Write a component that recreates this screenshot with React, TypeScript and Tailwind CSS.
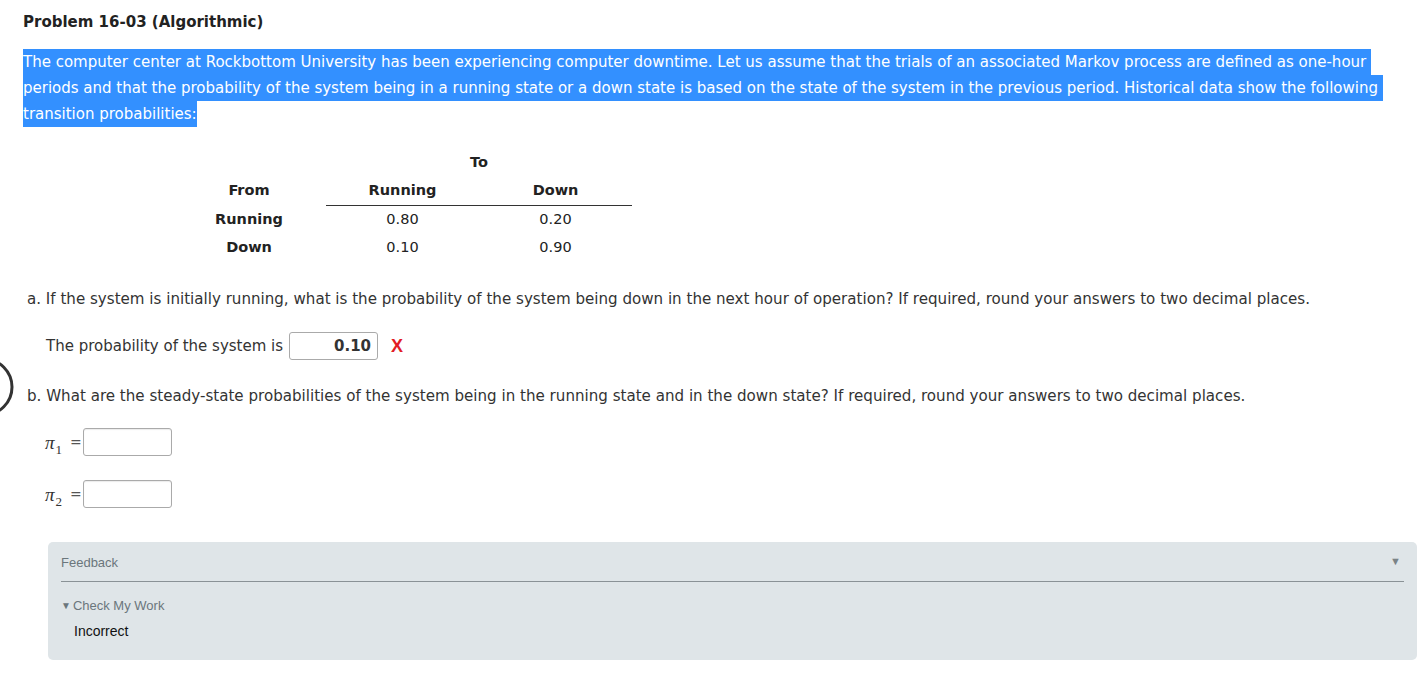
import React from "react";

const hl = "bg-[#3390ff] text-white py-[4px] box-decoration-clone";

function PiInput({ n }: { n: string }) {
  return (
    <div className="flex items-center h-[28px]">
      <span className="w-[47px] pl-[22px] font-['Liberation_Serif',serif] italic text-[19px] text-[#333] leading-none">
        π<sub className="not-italic text-[13px] align-[-2px] ml-[1px]">{n}</sub>
      </span>
      <span className="text-[14px] text-[#555] mr-[1px]">=</span>
      <div className="w-[89px] h-[28px] border border-[#aaa] rounded-[3px] bg-white shadow-[inset_0_1px_1px_rgba(0,0,0,0.08)]" />
    </div>
  );
}

export default function App() {
  return (
    <div className="relative w-[1417px] h-[698px] overflow-hidden bg-white font-['DejaVu_Sans',Verdana,sans-serif] text-[#222]">
      {/* partially visible circle on the left edge */}
      <svg className="absolute left-0 top-[356px]" width="16" height="62" viewBox="0 0 16 62">
        <circle cx="-16" cy="31" r="28" fill="none" stroke="#333" strokeWidth="3" />
      </svg>

      <div className="pl-[23px] pt-[12px]">
        <h1 className="text-[15px] font-bold leading-[20px] text-[#222]">Problem 16-03 (Algorithmic)</h1>

        <p className="mt-[17px] text-[15px] leading-[26px] text-[#333]">
          <span className={hl}>
            The computer center at Rockbottom University has been experiencing computer downtime. Let us assume that the trials of an associated Markov process are defined as one-hour&nbsp;
            <br />
            periods and that the probability of the system being in a running state or a down state is based on the state of the system in the previous period. Historical data show the following&nbsp;
            <br />
            transition probabilities:
          </span>
        </p>

        <table className="ml-[149px] mt-[22px] text-[14.5px] text-[#222] border-collapse">
          <tbody>
            <tr className="h-[28px]">
              <td className="w-[154px]" />
              <td colSpan={2} className="text-center font-bold">To</td>
            </tr>
            <tr className="h-[28px]">
              <td className="w-[154px] text-center font-bold">From</td>
              <td className="w-[153px] text-center font-bold border-b border-[#333]">Running</td>
              <td className="w-[153px] text-center font-bold border-b border-[#333]">Down</td>
            </tr>
            <tr className="h-[29px]">
              <td className="text-center font-bold">Running</td>
              <td className="text-center">0.80</td>
              <td className="text-center">0.20</td>
            </tr>
            <tr className="h-[28px]">
              <td className="text-center font-bold">Down</td>
              <td className="text-center">0.10</td>
              <td className="text-center">0.90</td>
            </tr>
          </tbody>
        </table>

        <p className="mt-[27px] ml-[4px] text-[15.1px] leading-[20px] text-[#333]">
          a. If the system is initially running, what is the probability of the system being down in the next hour of operation? If required, round your answers to two decimal places.
        </p>

        <div className="mt-[23px] ml-[23px] flex items-center text-[15px] text-[#333]">
          <span>The probability of the system is</span>
          <div className="ml-[6px] w-[89px] h-[28px] border border-[#aaa] rounded-[3px] flex items-center justify-end pr-[6px] font-bold text-[#333]">
            0.10
          </div>
          <span className="ml-[13px] text-[#e21d24] font-bold font-['Liberation_Sans',Arial,sans-serif] text-[18px] leading-none">X</span>
        </div>

        <p className="mt-[26px] ml-[4px] text-[15.1px] leading-[20px] text-[#333]">
          b. What are the steady-state probabilities of the system being in the running state and in the down state? If required, round your answers to two decimal places.
        </p>

        <div className="mt-[22px] flex flex-col gap-[24px]">
          <PiInput n="1" />
          <PiInput n="2" />
        </div>
      </div>

      <div className="absolute left-[48px] top-[542px] w-[1369px] h-[118px] bg-[#dfe5e8] rounded-[5px] font-['Liberation_Sans',Arial,sans-serif]">
        <div className="mx-[13px] pt-[11px] h-[40px] border-b border-[#8a9296] flex justify-between">
          <span className="text-[13px] text-[#6b767c]">Feedback</span>
          <span className="text-[11px] text-[#7b8387] mr-[3px]">▼</span>
        </div>
        <div className="ml-[13px] mt-[14px] text-[13px] text-[#6b767c] flex items-center">
          <span className="text-[10px] mr-[2px]">▼</span>Check My Work
        </div>
        <div className="ml-[26px] mt-[5px] text-[14px] text-[#111]">Incorrect</div>
      </div>
    </div>
  );
}
